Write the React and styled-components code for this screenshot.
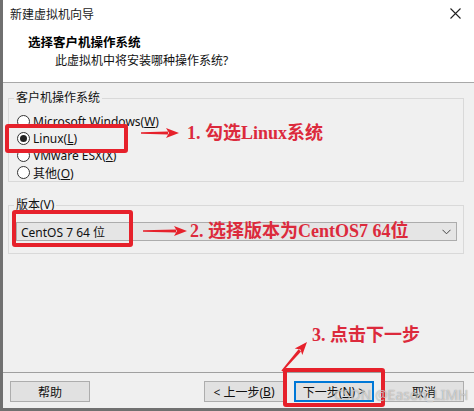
import styled, { createGlobalStyle } from "styled-components";

const GlobalStyle = createGlobalStyle`
  html, body {
    margin: 0;
    padding: 0;
    background: #ffffff;
  }
  body {
    font-family: "Noto Sans", "Noto Sans CJK SC", sans-serif;
  }
`;

const RED = "#e6212b";
const INK = "#dc2a3c";

const Dialog = () => {
  return (
    <Window>
      <GlobalStyle />
      <TitleBar>
        <span>新建虚拟机向导</span>
        <svg width="11" height="11" viewBox="0 0 11 11">
          <path d="M0.5 0.5 L10.5 10.5 M10.5 0.5 L0.5 10.5" stroke="#222" strokeWidth="1.1" />
        </svg>
      </TitleBar>

      <Header>
        <HeadTitle>选择客户机操作系统</HeadTitle>
        <HeadSub>此虚拟机中将安装哪种操作系统?</HeadSub>
      </Header>

      <Body>
        <Group>
          <Legend>客户机操作系统</Legend>
          <Radio label="Microsoft Windows" keyChar="W" />
          <Radio label="Linux" keyChar="L" checked />
          <Radio label="VMware ESX" keyChar="X" />
          <Radio label="其他" keyChar="O" />
        </Group>

        <Group $gap>
          <Legend>版本(V)</Legend>
          <Select>
            <span>CentOS 7 64 位</span>
            <svg width="9" height="6" viewBox="0 0 9 6">
              <path d="M0.5 0.8 L4.5 4.8 L8.5 0.8" fill="none" stroke="#444" strokeWidth="1" />
            </svg>
          </Select>
        </Group>
      </Body>

      <Footer>
        <Button>帮助</Button>
        <Spacer />
        <Button>&lt; 上一步(<u>B</u>)</Button>
        <Button $primary>下一步(<u>N</u>) &gt;</Button>
        <Button>取消</Button>
      </Footer>

      <Overlay>
        <RedBox $x={5} $y={124} $w={123} $h={29} />
        <RedBox $x={12} $y={210} $w={121} $h={37} />
        <RedBox $x={283} $y={368} $w={102} $h={39} />

        <Arrow x1={141} y1={133} x2={179} y2={133} />
        <Arrow x1={143} y1={231} x2={187} y2={231} />
        <Arrow x1={282} y1={371} x2={307} y2={342} />

        <Note $x={187} $y={122}>1. 勾选Linux系统</Note>
        <Note $x={190} $y={220}>2. 选择版本为CentOS7 64位</Note>
        <Note $x={312} $y={324}>3. 点击下一步</Note>

        <Watermark>CSDN @Eason_LIMH</Watermark>
      </Overlay>
    </Window>
  );
};

const Radio = ({ label, keyChar, checked }) => (
  <RadioRow>
    <Dot $on={checked} />
    <span>
      {label}(<u>{keyChar}</u>)
    </span>
  </RadioRow>
);

// arrow drawn in page coordinates, svg box fitted around it
const Arrow = ({ x1, y1, x2, y2 }) => {
  const pad = 8;
  const left = Math.min(x1, x2) - pad;
  const top = Math.min(y1, y2) - pad;
  const w = Math.abs(x2 - x1) + pad * 2;
  const h = Math.abs(y2 - y1) + pad * 2;
  const ang = Math.atan2(y2 - y1, x2 - x1);
  const len = Math.hypot(x2 - x1, y2 - y1);
  return (
    <ArrowSvg width={w} height={h} style={{ left, top }}>
      <g transform={`translate(${x1 - left} ${y1 - top}) rotate(${(ang * 180) / Math.PI})`}>
        <path d={`M0 -0.8 L${len - 11} -1.6 L${len - 11} 1.6 L0 0.8 Z`} fill={RED} />
        <path d={`M${len - 13} -5 L${len} 0 L${len - 13} 5 L${len - 10} 0 Z`} fill={RED} />
      </g>
    </ArrowSvg>
  );
};

const Window = styled.div`
  position: relative;
  width: 474px;
  height: 411px;
  box-sizing: border-box;
  border-left: 3px solid #707070;
  border-bottom: 3px solid #707070;
  display: flex;
  flex-direction: column;
  overflow: hidden;
  font-size: 12px;
  color: #000;
`;

const TitleBar = styled.div`
  height: 27px;
  flex: none;
  display: flex;
  align-items: center;
  justify-content: space-between;
  padding: 0 13px 0 7px;
  background: #fff;
  color: #1a1a1a;
  font-size: 12px;
`;

const Header = styled.div`
  height: 56px;
  flex: none;
  box-sizing: border-box;
  padding: 8px 0 0 25px;
  background: #fff;
  border-bottom: 1px solid #a8a8a8;
`;

const HeadTitle = styled.div`
  font-weight: 700;
  font-size: 12.5px;
  line-height: 16px;
`;

const HeadSub = styled.div`
  margin-top: 2px;
  padding-left: 27px;
  line-height: 16px;
  color: #111;
`;

const Body = styled.div`
  flex: 1;
  background: #f0f0f0;
  padding: 7px 10px 0 5px;
`;

const Group = styled.fieldset`
  margin: ${({ $gap }) => ($gap ? "15px 0 0" : "0")};
  padding: ${({ $gap }) => ($gap ? "9px 6px 12px 7px" : "7px 6px 0 7px")};
  border: 1px solid #d9d9d9;
  min-width: 0;
`;

const Legend = styled.legend`
  padding: 0 2px;
  margin-left: -2px;
  line-height: 16px;
  font-size: 12px;
  color: #111;
`;

const RadioRow = styled.div`
  height: 17px;
  display: flex;
  align-items: center;
  gap: 3px;
  color: #111;

  u {
    text-underline-offset: 1px;
  }
`;

const Dot = styled.span`
  width: 11px;
  height: 11px;
  margin-left: 1px;
  border: 1px solid #333;
  border-radius: 50%;
  background: #fff;
  display: grid;
  place-items: center;

  &::after {
    content: "";
    width: 7px;
    height: 7px;
    border-radius: 50%;
    background: ${({ $on }) => ($on ? "#222" : "transparent")};
  }
`;

const Select = styled.div`
  height: 19px;
  box-sizing: border-box;
  display: flex;
  align-items: center;
  justify-content: space-between;
  padding: 0 5px 0 4px;
  background: #e5e5e5;
  border: 1px solid #acacac;
  color: #111;
`;

const Footer = styled.div`
  height: 36px;
  flex: none;
  box-sizing: border-box;
  display: flex;
  align-items: flex-start;
  gap: 10px;
  padding: 8px 10px 0 7px;
  background: #f0f0f0;
  border-top: 1px solid #a0a0a0;
`;

const Spacer = styled.div`
  flex: 1;
`;

const Button = styled.div`
  width: 80px;
  height: 21px;
  box-sizing: border-box;
  display: flex;
  align-items: center;
  justify-content: center;
  background: #e1e1e1;
  border: 1px solid ${({ $primary }) => ($primary ? "#0078d7" : "#adadad")};
  box-shadow: ${({ $primary }) => ($primary ? "inset 0 0 0 1px #0078d7" : "none")};
  color: #111;
  font-size: 12px;
`;

const Overlay = styled.div`
  position: absolute;
  left: -3px;
  top: 0;
  width: 474px;
  height: 411px;
  pointer-events: none;
`;

const RedBox = styled.div`
  position: absolute;
  left: ${({ $x }) => $x}px;
  top: ${({ $y }) => $y}px;
  width: ${({ $w }) => $w}px;
  height: ${({ $h }) => $h}px;
  box-sizing: border-box;
  border: 4px solid ${RED};
  border-radius: 3px;
`;

const ArrowSvg = styled.svg`
  position: absolute;
  overflow: visible;
`;

const Note = styled.div`
  position: absolute;
  left: ${({ $x }) => $x}px;
  top: ${({ $y }) => $y}px;
  line-height: 22px;
  font-family: "Liberation Serif", "Noto Sans CJK SC", serif;
  font-weight: 700;
  font-size: 18px;
  color: ${INK};
  white-space: nowrap;
`;

const Watermark = styled.div`
  position: absolute;
  left: 334px;
  top: 386px;
  font-family: "Noto Sans", sans-serif;
  font-size: 14px;
  line-height: 18px;
  color: rgba(255, 255, 255, 0.55);
  text-shadow: 0 0 1px rgba(90, 90, 90, 0.7);
  white-space: nowrap;
`;

export default Dialog;
